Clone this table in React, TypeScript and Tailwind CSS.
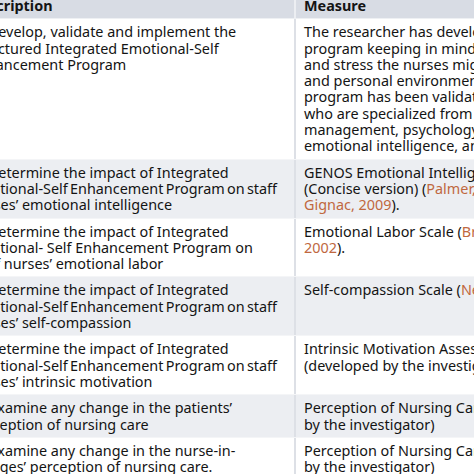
import React from 'react';

type Part = string | { cite: string };
type Line = Part[] | string;

interface Row {
  objective: string[];
  measure: Line[];
}

const rows: Row[] = [
  {
    objective: [
      'To develop, validate and implement the',
      'Structured Integrated Emotional-Self',
      'Enhancement Program',
    ],
    measure: [
      'The researcher has developed the',
      'program keeping in mind the needs',
      'and stress the nurses might face in work',
      'and personal environment. The',
      'program has been validated by experts',
      'who are specialized from nursing',
      'management, psychology and',
      'emotional intelligence, and',
    ],
  },
  {
    objective: [
      'To determine the impact of Integrated',
      'Emotional-Self Enhancement Program on staff',
      'nurses\u2019 emotional intelligence',
    ],
    measure: [
      'GENOS Emotional Intelligence Inventory',
      ['(Concise version) (', { cite: 'Palmer, Stough, Harmer &' }],
      [{ cite: 'Gignac, 2009' }, ').'],
    ],
  },
  {
    objective: [
      'To determine the impact of Integrated',
      'Emotional- Self Enhancement Program on',
      'staff nurses\u2019 emotional labor',
    ],
    measure: [
      ['Emotional Labor Scale (', { cite: 'Brotheridge & Lee,' }],
      [{ cite: '2002' }, ').'],
    ],
  },
  {
    objective: [
      'To determine the impact of Integrated',
      'Emotional-Self Enhancement Program on staff',
      'nurses\u2019 self-compassion',
    ],
    measure: [['Self-compassion Scale (', { cite: 'Neff, 2003' }, ').']],
  },
  {
    objective: [
      'To determine the impact of Integrated',
      'Emotional-Self Enhancement Program on staff',
      'nurses\u2019 intrinsic motivation',
    ],
    measure: [
      'Intrinsic Motivation Assessment Scale',
      '(developed by the investigator)',
    ],
  },
  {
    objective: [
      'To examine any change in the patients\u2019',
      'perception of nursing care',
    ],
    measure: [
      'Perception of Nursing Care Scale (developed',
      'by the investigator)',
    ],
  },
  {
    objective: [
      'To examine any change in the nurse-in-',
      'charges\u2019 perception of nursing care.',
    ],
    measure: [
      'Perception of Nursing Care Scale (developed',
      'by the investigator)',
    ],
  },
];

const renderLine = (line: Line) => {
  if (typeof line === 'string') return line;
  return line.map((p, i) =>
    typeof p === 'string' ? (
      <span key={i}>{p}</span>
    ) : (
      <span key={i} className="text-[#c0683f]">
        {p.cite}
      </span>
    )
  );
};

export default function App() {
  return (
    <div
      className="w-[474px] h-[474px] overflow-hidden bg-white text-[#141414]"
      style={{ fontFamily: '"Noto Sans", "DejaVu Sans", sans-serif' }}
    >
      <div className="ml-[-38px] mt-[-7px] w-[650px] text-[14.4px] leading-[16.3px]">
        {/* header */}
        <div className="flex bg-[#d8dce4] font-bold border-b border-[#eef0f3]">
          <div className="w-[334px] px-2 pt-[5px] pb-[4px] border-r-2 border-[#eceef2]">Description</div>
          <div className="flex-1 px-2 pt-[5px] pb-[4px]">Measure</div>
        </div>

        {rows.map((row, i) => (
          <div
            key={i}
            className={`flex border-b border-[#f4f5f7] ${i % 2 === 1 ? 'bg-[#eceef2]' : 'bg-white'}`}
          >
            <div className="w-[334px] px-2 pt-[5px] pb-[4px] border-r-2 border-[#dde0e6] whitespace-nowrap">
              {row.objective.map((l, j) => (
                <div key={j} className={l.includes('Program on staff') ? '[word-spacing:-1.5px]' : ''}>
                  {l}
                </div>
              ))}
            </div>
            <div className="flex-1 px-2 pt-[5px] pb-[4px] whitespace-nowrap">
              {row.measure.map((l, j) => (
                <div key={j}>{renderLine(l)}</div>
              ))}
            </div>
          </div>
        ))}
      </div>
    </div>
  );
}
